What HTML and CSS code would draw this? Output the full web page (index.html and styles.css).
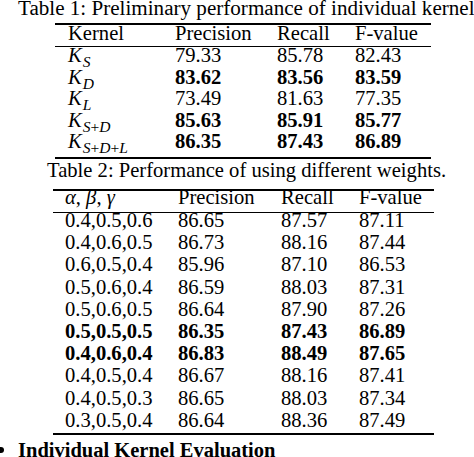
FILE: index.html
```html
<!DOCTYPE html>
<html>
<head>
<meta charset="utf-8">
<link rel="stylesheet" href="styles.css">
</head>
<body>
<div class="page">
  <p class="cap cap1">Table 1: Preliminary performance of individual kernels</p>
  <div class="tbl t1">
    <div class="c h">Kernel</div><div class="c h">Precision</div><div class="c h">Recall</div><div class="c h">F-value</div>

    <div class="c"><i>K</i><span class="sub"><i>S</i></span></div><div class="c">79.33</div><div class="c">85.78</div><div class="c">82.43</div>
    <div class="c"><i>K</i><span class="sub"><i>D</i></span></div><div class="c b">83.62</div><div class="c b">83.56</div><div class="c b">83.59</div>
    <div class="c"><i>K</i><span class="sub"><i>L</i></span></div><div class="c">73.49</div><div class="c">81.63</div><div class="c">77.35</div>
    <div class="c"><i>K</i><span class="sub"><i>S</i>+<i>D</i></span></div><div class="c b">85.63</div><div class="c b">85.91</div><div class="c b">85.77</div>
    <div class="c last"><i>K</i><span class="sub"><i>S</i>+<i>D</i>+<i>L</i></span></div><div class="c last b">86.35</div><div class="c last b">87.43</div><div class="c last b">86.89</div>
  </div>

  <p class="cap cap2">Table 2: Performance of using different weights.</p>
  <div class="tbl t2">
    <div class="c h"><i>α</i>, <i>β</i>, <i>γ</i></div><div class="c h">Precision</div><div class="c h">Recall</div><div class="c h">F-value</div>

    <div class="c">0.4,0.5,0.6</div><div class="c">86.65</div><div class="c">87.57</div><div class="c">87.11</div>
    <div class="c">0.4,0.6,0.5</div><div class="c">86.73</div><div class="c">88.16</div><div class="c">87.44</div>
    <div class="c">0.6,0.5,0.4</div><div class="c">85.96</div><div class="c">87.10</div><div class="c">86.53</div>
    <div class="c">0.5,0.6,0.4</div><div class="c">86.59</div><div class="c">88.03</div><div class="c">87.31</div>
    <div class="c">0.5,0.6,0.5</div><div class="c">86.64</div><div class="c">87.90</div><div class="c">87.26</div>
    <div class="c b">0.5,0.5,0.5</div><div class="c b">86.35</div><div class="c b">87.43</div><div class="c b">86.89</div>
    <div class="c b">0.4,0.6,0.4</div><div class="c b">86.83</div><div class="c b">88.49</div><div class="c b">87.65</div>
    <div class="c">0.4,0.5,0.4</div><div class="c">86.67</div><div class="c">88.16</div><div class="c">87.41</div>
    <div class="c">0.4,0.5,0.3</div><div class="c">86.65</div><div class="c">88.03</div><div class="c">87.34</div>
    <div class="c last">0.3,0.5,0.4</div><div class="c last">86.64</div><div class="c last">88.36</div><div class="c last">87.49</div>
  </div>

  <p class="sec"><span class="bul"></span><b>Individual Kernel Evaluation</b></p>
</div>
</body>
</html>
```

FILE: styles.css
```css
html, body {
  margin: 0;
  padding: 0;
  background: #fff;
  overflow: hidden;
}

body {
  font-family: "Liberation Serif", "Times New Roman", serif;
  font-size: 20.6px;
  color: #000;
}

.page {
  width: 474px;
  height: 457px;
  overflow: hidden;
}

.cap {
  margin: 0;
  line-height: 16px;
  white-space: nowrap;
}

.cap1 {
  padding-left: 18px;
  font-size: 21.1px;
}

.cap2 {
  margin-top: 3px;
  padding-left: 47px;
}

.tbl {
  display: grid;
  width: fit-content;
  border-top: 2px solid #000;
  border-bottom: 2px solid #000;
}

.c {
  white-space: nowrap;
}

.b {
  font-weight: bold;
}

.sub {
  font-size: 15.5px;
  line-height: 0;
  vertical-align: -5px;
  margin-left: 1px;
}

/* Table 1 */
.t1 {
  margin: 7px 0 0 55px;
  grid-template-columns: 107px 102px 78px 89px;
}

.t1 .c {
  padding-left: 13px;
  line-height: 16px;
  padding-bottom: 5.5px;
}

.t1 .h {
  padding-bottom: 5px;
  border-bottom: 1px solid #000;
}

.t1 .last {
  padding-bottom: 8px;
}

/* Table 2 */
.t2 {
  margin: 11px 0 0 53px;
  grid-template-columns: 113px 103px 78px 87px;
}

.t2 .c {
  padding-left: 12px;
  line-height: 14px;
  padding-bottom: 8.2px;
}

.t2 .h {
  line-height: 12px;
  padding-bottom: 9px;
  border-bottom: 1px solid #000;
}

.t2 .last {
  padding-bottom: 6.2px;
}

/* Section heading */
.sec {
  margin: 0;
  line-height: 30px;
  white-space: nowrap;
  font-size: 20.5px;
}

.bul {
  display: inline-block;
  width: 6px;
  height: 6px;
  border-radius: 50%;
  background: #000;
  margin-left: -2px;
  margin-right: 14px;
  vertical-align: 4px;
}
```
